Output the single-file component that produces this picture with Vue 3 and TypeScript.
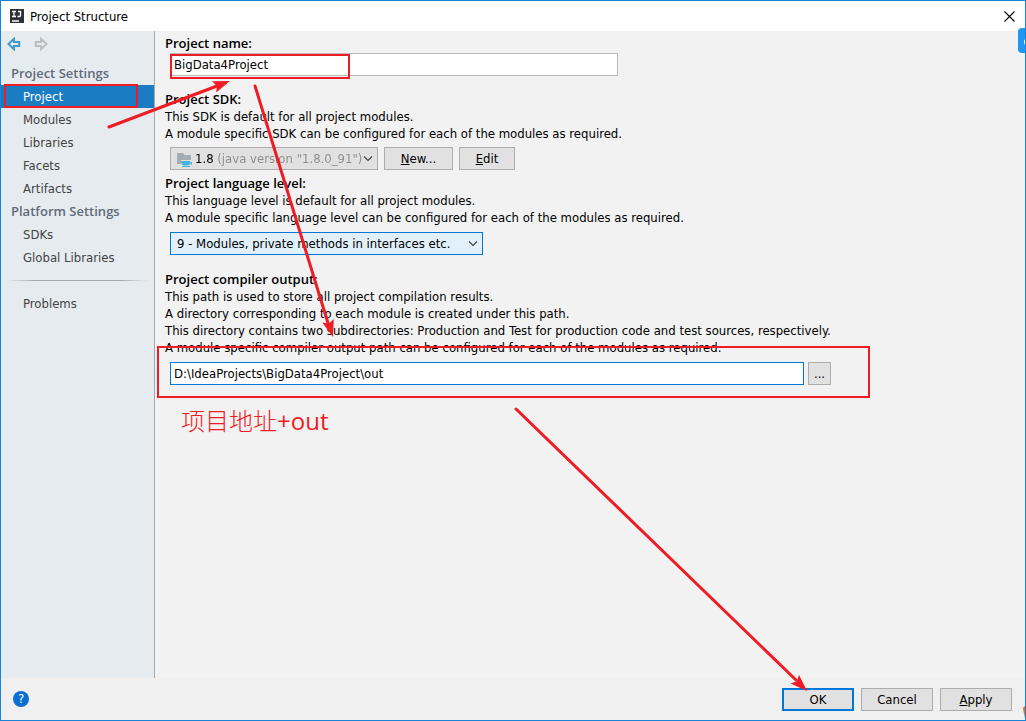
<script setup lang="ts">
import { ref } from 'vue'

const projectName = ref('BigData4Project')
const outputPath = ref('D:\\IdeaProjects\\BigData4Project\\out')
const sdk = ref('1.8')
const level = ref('9')
const active = ref('Project')

const groups = [
  { title: 'Project Settings', items: ['Project', 'Modules', 'Libraries', 'Facets', 'Artifacts'] },
  { title: 'Platform Settings', items: ['SDKs', 'Global Libraries'] },
]
</script>

<template>
  <div class="window">
    <header class="titlebar">
      <svg class="logo" width="14" height="14" viewBox="0 0 14 14" aria-hidden="true">
        <rect width="14" height="14" fill="#303038" />
        <path d="M2 2.500h4M4 2.500v5M2 7.500h4M8 2.500h3M10.500 2v4.500q0 1-1 1H7.500M2 12h7" fill="none" stroke="#fff" stroke-width="1.300" />
      </svg>
      <h1>Project Structure</h1>
      <button class="close" type="button" aria-label="Close">
        <svg width="11" height="11" viewBox="0 0 11 11"><path d="M.5.5l10 10M10.5.5l-10 10" stroke="#000" stroke-width="1.1" /></svg>
      </button>
    </header>

    <div class="body">
      <nav class="sidebar">
        <div class="history">
          <button type="button" aria-label="Back">
            <svg width="14" height="14" viewBox="0 0 14 14"><path d="M1.500 7L7 1.800V5h5.200v4H7v3.200z" fill="#e6ebef" stroke="#4498c8" stroke-width="2" /></svg>
          </button>
          <button type="button" aria-label="Forward" disabled>
            <svg width="14" height="14" viewBox="0 0 14 14"><path d="M12.500 7L7 1.800V5H1.800v4H7v3.200z" fill="none" stroke="#bebebe" stroke-width="2" /></svg>
          </button>
        </div>
        <template v-for="g in groups" :key="g.title">
          <h2>{{ g.title }}</h2>
          <a v-for="i in g.items" :key="i" href="#" :class="{ active: i === active }" @click.prevent="active = i">{{ i }}</a>
        </template>
        <hr />
        <a href="#" @click.prevent="active = 'Problems'">Problems</a>
      </nav>

      <main class="form">
        <section>
          <label class="heading" for="name">Project name:</label>
          <div class="row name-row"><input id="name" v-model="projectName" class="name" type="text" /></div>
        </section>

        <section>
          <label class="heading" for="sdk">Project SDK:</label>
          <p>This SDK is default for all project modules.</p>
          <p>A module specific SDK can be configured for each of the modules as required.</p>
          <div class="row">
            <div class="combo sdk">
              <svg class="folder" width="16" height="16" viewBox="0 0 16 16" aria-hidden="true">
                <path d="M1 2h6l1.500 2H15v5H5v4H1z" fill="#a3adb3" />
                <path d="M5 10h9v1h2v2.500h-2.500q-1 1-2.500 1H8q-3-.5-3-4.500zM14 12v.7h1V12zM6 15h8v1H6z" fill="#46b4dc" fill-rule="evenodd" />
              </svg>
              <select id="sdk" v-model="sdk"><option value="1.8">1.8 (java version "1.8.0_91")</option></select>
              <svg class="chevron" width="10" height="6" viewBox="0 0 10 6" aria-hidden="true"><path d="M1 .5l4 4 4-4" fill="none" stroke="#444" stroke-width="1.2" /></svg>
            </div>
            <button class="btn new" type="button"><u>N</u>ew...</button>
            <button class="btn edit" type="button"><u>E</u>dit</button>
          </div>
        </section>

        <section class="level-section">
          <label class="heading" for="level">Project language level:</label>
          <p>This language level is default for all project modules.</p>
          <p>A module specific language level can be configured for each of the modules as required.</p>
          <div class="row">
            <div class="combo level">
              <select id="level" v-model="level"><option value="9">9 - Modules, private methods in interfaces etc.</option></select>
              <svg class="chevron" width="10" height="6" viewBox="0 0 10 6" aria-hidden="true"><path d="M1 .5l4 4 4-4" fill="none" stroke="#444" stroke-width="1.2" /></svg>
            </div>
          </div>
        </section>

        <section>
          <label class="heading" for="output">Project compiler output:</label>
          <p>This path is used to store all project compilation results.</p>
          <p>A directory corresponding to each module is created under this path.</p>
          <p>This directory contains two subdirectories: Production and Test for production code and test sources, respectively.</p>
          <p>A module specific compiler output path can be configured for each of the modules as required.</p>
          <div class="row path-row">
            <input id="output" v-model="outputPath" class="output" type="text" />
            <button class="btn browse" type="button" aria-label="Browse">...</button>
          </div>
        </section>
      </main>
    </div>

    <footer class="footer">
      <button class="help" type="button" aria-label="Help">?</button>
      <div class="actions">
        <button class="btn primary" type="button">OK</button>
        <button class="btn" type="button">Cancel</button>
        <button class="btn" type="button"><u>A</u>pply</button>
      </div>
    </footer>

    <svg class="marks" width="1026" height="721" viewBox="0 0 1026 721" aria-hidden="true">
      <g fill="none" stroke="#ee1c24" stroke-width="2">
        <rect x="5" y="85" width="132" height="22" />
        <rect x="171" y="55" width="178" height="23" />
        <rect x="158" y="347" width="711" height="50" />
      </g>
      <g stroke="#ee1c24" stroke-width="3" stroke-linecap="round">
        <path d="M109 127L217 86M255 86L328 323M516 409L796 680" />
      </g>
      <g fill="#ee1c24">
        <path transform="translate(230 81) rotate(-20.500)" d="M0 0L-17-6L-14 0L-17 6z" />
        <path transform="translate(333 337) rotate(73)" d="M0 0L-17-6L-14 0L-17 6z" />
        <path transform="translate(807 691) rotate(44)" d="M0 0L-17-6L-14 0L-17 6z" />
      </g>
      <rect x="1018" y="28" width="16" height="25" rx="4" fill="#2196f3" />
      <circle cx="1028" cy="42" r="4" fill="#fff" />
      <path d="M1026 706q-3 0-3 3l2 9h1z" fill="#f26522" />
    </svg>
    <div class="note"><span>项目地址</span>+out</div>
  </div>
</template>

<style>
body { margin: 0; }
</style>

<style scoped>
* { box-sizing: border-box; }
.window {
  position: relative;
  display: flex;
  flex-direction: column;
  min-height: 100vh;
  overflow: hidden;
  border: 1px solid #1883d7;
  background: #f0f0f0;
  color: #000;
  font: 13px/17px "DejaVu Sans Condensed", "Open Sans", sans-serif;
}
button, input, select { font: inherit; color: inherit; margin: 0; }
h1, h2, p { margin: 0; font: inherit; }
.titlebar { display: flex; align-items: center; height: 30px; padding: 0 10px 0 9px; background: #fff; }
.titlebar h1 { margin-left: 6px; }
.close { display: flex; margin-left: auto; padding: 0; border: 0; background: none; }
.body { display: flex; flex: 1; }
.sidebar { flex: 0 0 154px; border-right: 1px solid #a9a9a9; background: #e6ebef; color: #434343; }
.history { display: flex; gap: 13px; height: 31px; padding: 6px; }
.history button { display: flex; padding: 0; border: 0; background: none; height: 14px; }
.sidebar h2 { padding-left: 10px; font-family: "Open Sans", sans-serif; line-height: 23px; font-weight: 600; color: #5f6b7a; }
.sidebar a { display: block; padding-left: 22px; line-height: 23px; color: inherit; text-decoration: none; }
.sidebar a.active { background: #1a7dc4; color: #fff; }
.sidebar hr { height: 1px; margin: 11px 6px; border: 0; background: linear-gradient(90deg, transparent, #a8a8a8 20%, #a8a8a8 80%, transparent); }
.form { flex: 1; min-width: 0; padding: 4px 10px; background: #f2f2f2; }
.heading { display: block; font-family: "Open Sans", sans-serif; font-weight: 600; }
.row { display: flex; gap: 6px; margin: 5px 0 5px 5px; }
.name-row { margin: 1px 0 15px 5px; }
.level-section .row { margin: 6px 0 16px 5px; }
.path-row { gap: 4px; margin-top: 6px; }
input { height: 23px; padding: 0 3px; border: 1px solid #bababa; background: #fff; outline: 0; }
.name { flex: 0 1 448px; }
.output { flex: 0 1 634px; border-color: #0078d7; }
.combo { display: flex; align-items: center; height: 23px; padding: 0 4px 0 5px; border: 1px solid #adadad; background: #e1e1e1; }
.combo select { flex: 1; min-width: 0; padding: 0; border: 0; background: none; appearance: none; outline: 0; }
.combo.sdk { width: 208px; }
.combo.sdk select {
  margin-left: 3px;
  background: linear-gradient(90deg, #000 20px, #8c8c8c 20px);
  background-clip: text;
  -webkit-text-fill-color: transparent;
}
.combo.level { width: 313px; padding-left: 6px; border-color: #0078d7; background: #e1f0fa; }
.btn { height: 23px; padding: 0; border: 1px solid #adadad; background: #e1e1e1; }
.new { width: 69px; }
.edit { width: 56px; }
.browse { width: 23px; }
.footer { display: flex; align-items: center; justify-content: space-between; height: 42px; padding: 0 13px 0 12px; }
.help { width: 16px; height: 16px; padding: 0; border: 0; border-radius: 50%; background: #0a6fd0; color: #fff; font-size: 13px; line-height: 16px; }
.actions { display: flex; gap: 7px; }
.actions .btn { width: 72px; }
.actions .primary { border: 2px solid #0078d7; }
.marks { position: absolute; top: -1px; left: -1px; pointer-events: none; }
.note { position: absolute; top: 403px; left: 180px; color: #ee1c24; font: 24px/34px "Open Sans", "Noto Sans CJK SC", sans-serif; }
.note span { font-weight: 300; }
</style>
